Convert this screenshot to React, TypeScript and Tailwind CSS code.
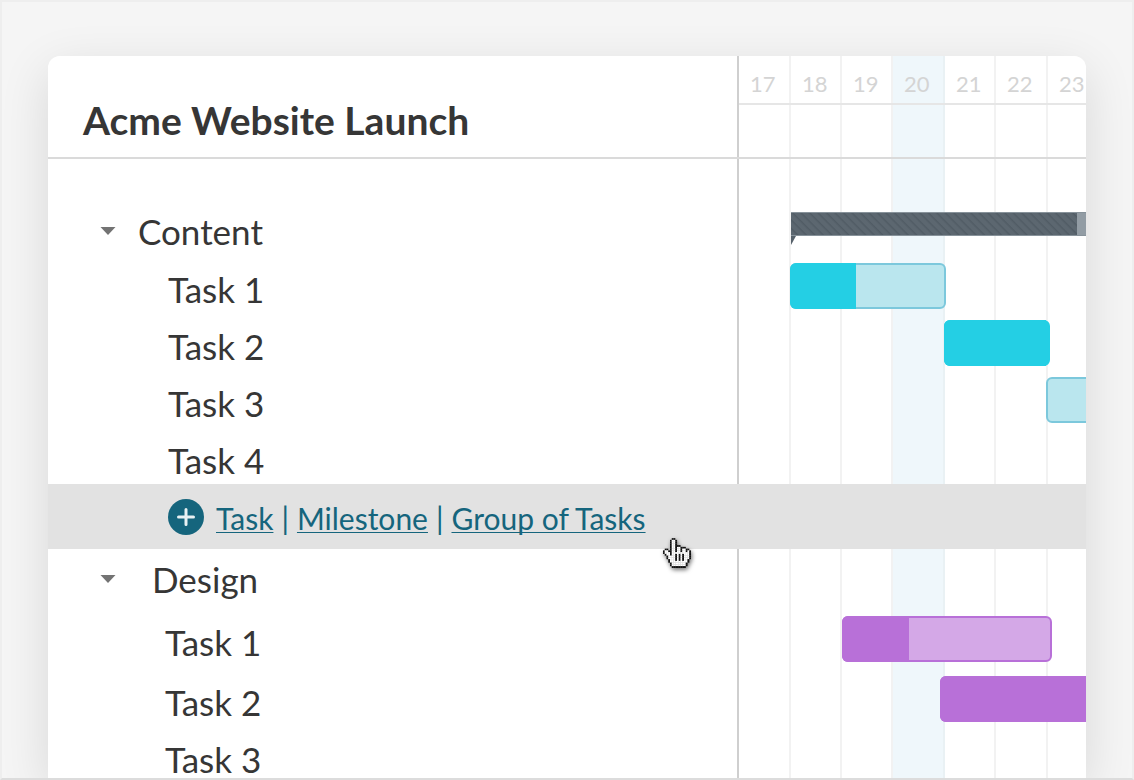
import React from 'react';
import clsx from 'clsx';

interface Bar {
  // start is the distance from the first day line
  start: string;
  width: string;
  done: string;
  className: string;
  doneClassName: string;
}

interface TaskRow {
  name: string;
  height: string;
  bar?: Bar;
}

interface Group {
  name: string;
  titleIndent: string;
  taskIndent: string;
  height: string;
  hasSummary?: boolean;
  tasks: TaskRow[];
}

const days = [17, 18, 19, 20, 21, 22, 23];
const today = 20;

const content: Group = {
  name: 'Content',
  titleIndent: 'gap-[22px]',
  taskIndent: 'pl-[120px]',
  height: 'h-[97px] pt-12',
  hasSummary: true,
  tasks: [
    {
      name: 'Task 1',
      height: 'h-[57px]',
      bar: {
        start: 'ml-[51px]',
        width: 'w-[156px]',
        done: 'w-[66px]',
        className: 'border-[#7cc8dc] bg-[#bae6ee]',
        doneClassName: 'bg-[#24cfe4]',
      },
    },
    {
      name: 'Task 2',
      height: 'h-[57px]',
      bar: {
        start: 'ml-[205px]',
        width: 'w-[106px]',
        done: 'w-full',
        className: 'border-[#24cfe4] bg-[#24cfe4]',
        doneClassName: 'bg-[#24cfe4]',
      },
    },
    {
      name: 'Task 3',
      height: 'h-[57px]',
      bar: {
        start: 'ml-[307px]',
        width: 'w-[104px]',
        done: 'w-0',
        className: 'border-[#7cc8dc] bg-[#bae6ee]',
        doneClassName: 'bg-[#24cfe4]',
      },
    },
    { name: 'Task 4', height: 'h-[57px]' },
  ],
};

const design: Group = {
  name: 'Design',
  titleIndent: 'gap-9',
  taskIndent: 'pl-[117px]',
  height: 'h-[60px] pt-1.5',
  tasks: [
    {
      name: 'Task 1',
      height: 'h-[60px]',
      bar: {
        start: 'ml-[103px]',
        width: 'w-[210px]',
        done: 'w-[67px]',
        className: 'border-[#b870d8] bg-[#d4a8e7]',
        doneClassName: 'bg-[#b870d8]',
      },
    },
    {
      name: 'Task 2',
      height: 'h-[57px]',
      bar: {
        start: 'ml-[201px]',
        width: 'w-[206px]',
        done: 'w-full',
        className: 'border-[#b870d8] bg-[#b870d8]',
        doneClassName: 'bg-[#b870d8]',
      },
    },
    { name: 'Task 3', height: 'h-[52px]' },
  ],
};

// # outline, o fill
const handBitmap = [
  '.....##.........',
  '....#oo#........',
  '....#oo#........',
  '....#oo#........',
  '....#oo###......',
  '....#oo#oo###...',
  '.##.#oo#oo#oo##.',
  '#oo##oo#oo#oo#o#',
  '#ooo#oooooooooo#',
  '.#oo#oo#o#o#ooo#',
  '..#oooo#o#o#ooo#',
  '..#oooo#o#o#ooo#',
  '...#ooo#o#o#oo#.',
  '...#oooooooooo#.',
  '....#oooooooo#..',
  '....#oooooooo#..',
  '.....########...',
];

const HandCursor: React.FC = () => (
  <svg
    viewBox="0 0 16 17"
    className="pointer-events-none absolute top-[54px] left-[615px] h-[30px] w-7 drop-shadow-[1px_2px_2px_rgba(0,0,0,0.6)]"
    aria-hidden="true"
  >
    {handBitmap.map((line, y) =>
      line.split('').map((cell, x) =>
        cell === '.' ? null : (
          <rect key={`${x}-${y}`} x={x} y={y} width="1.05" height="1.05" fill={cell === '#' ? '#111' : '#fff'} />
        )
      )
    )}
  </svg>
);

const DayColumns: React.FC = () => (
  <div className="absolute inset-y-0 right-0 grid w-[349px] grid-cols-[52px_51px_51px_52px_51px_52px_38px] border-l-2 border-[#cfcfcf]">
    {days.map((day) => (
      <div
        key={day}
        className={clsx(
          'border-r-2 last:border-r-0',
          day === today ? 'border-[#e9f1f4] bg-[#eff7fb]' : 'border-[#f2f2f2]'
        )}
      />
    ))}
  </div>
);

const TaskBar: React.FC<{ bar: Bar }> = ({ bar }) => (
  <div className={clsx('mt-[7px] h-[46px] shrink-0 rounded-md border-2', bar.start, bar.width, bar.className)}>
    <div className={clsx('-mt-0.5 -ml-0.5 h-[46px] rounded-l-md', bar.done, bar.doneClassName)} />
  </div>
);

const SummaryBar: React.FC = () => (
  <div className="mt-[5px] ml-[52px] w-full">
    <div className="flex h-6 border-y border-[#87929a] bg-[#929ca4]">
      <div className="w-[286px] bg-[repeating-linear-gradient(45deg,#5c6770_0px,#5c6770_3px,#515c65_5px,#5c6770_6px)]" />
    </div>
    <svg viewBox="0 0 5 9" className="h-[9px] w-[5px] fill-[#56616a]" aria-hidden="true">
      <path d="M0 0H5L0 9Z" />
    </svg>
  </div>
);

const GroupRows: React.FC<{ group: Group }> = ({ group }) => (
  <>
    <div className={clsx('flex', group.height)}>
      <div className="flex flex-1 items-start pl-[52px]">
        <button type="button" className={clsx('flex items-center text-[35px] leading-12', group.titleIndent)}>
          <svg viewBox="0 0 16 8" className="h-2 w-4 fill-[#737373]" aria-hidden="true">
            <path d="M0.5 0H15.5L8 8Z" />
          </svg>
          {group.name}
        </button>
      </div>
      <div className="flex w-[347px] items-start">{group.hasSummary && <SummaryBar />}</div>
    </div>
    {group.tasks.map((task) => (
      <div key={task.name} className={clsx('flex', task.height)}>
        <div className={clsx('flex-1 pt-[13px] text-[35px] leading-10', group.taskIndent)}>{task.name}</div>
        <div className="flex w-[347px] items-start">{task.bar && <TaskBar bar={task.bar} />}</div>
      </div>
    ))}
  </>
);

const App: React.FC = () => {
  return (
    <div className="flex min-h-screen flex-col overflow-hidden border-2 border-[#eeeeee] border-b-[#dcdcdc] bg-[#f5f5f5] px-[46px] pt-[54px] font-['Lato',sans-serif] text-[#363636]">
      <main className="relative flex-1 rounded-t-xl shadow-[0_14px_50px_rgba(0,0,0,0.12)]">
        <div className="relative h-full overflow-hidden rounded-t-xl bg-white">
          <DayColumns />
          <header className="relative flex h-[103px] border-b-2 border-[#dadada]">
            <h1 className="flex-1 pt-10 pl-[35px] text-[39px] leading-12 font-bold">Acme Website Launch</h1>
            <div className="w-[347px]">
              <div className="grid h-[49px] grid-cols-[52px_51px_51px_52px_51px_52px_38px] border-b-2 border-[#e6e6e6] pt-2 text-[22px] leading-10 text-[#d4d4d4]">
                {days.map((day) => (
                  <span key={day} className="pl-[11px]">
                    {day}
                  </span>
                ))}
              </div>
            </div>
          </header>

          <div className="relative">
            <GroupRows group={content} />
            <div className="relative z-10 flex h-[65px] items-center gap-3 bg-[#e2e2e2] pl-[120px] text-[30px] text-[#15657d]">
              <button type="button" aria-label="Add" className="flex size-9 items-center justify-center rounded-full bg-[#15657d]">
                <svg viewBox="0 0 18 18" className="size-[18px] stroke-[#e8f1f3]" strokeWidth="3" strokeLinecap="round" aria-hidden="true">
                  <path d="M9 1.5V16.5M1.5 9H16.5" />
                </svg>
              </button>
              <nav className="flex gap-2 pt-1 [text-decoration-skip-ink:none]">
                <a href="#task" className="underline decoration-1 underline-offset-2">Task</a>
                <span>|</span>
                <a href="#milestone" className="underline decoration-1 underline-offset-2">Milestone</a>
                <span>|</span>
                <a href="#group" className="underline decoration-1 underline-offset-2">Group of Tasks</a>
              </nav>
              <HandCursor />
            </div>
            <GroupRows group={design} />
          </div>
        </div>
      </main>
    </div>
  );
};

export default App;
